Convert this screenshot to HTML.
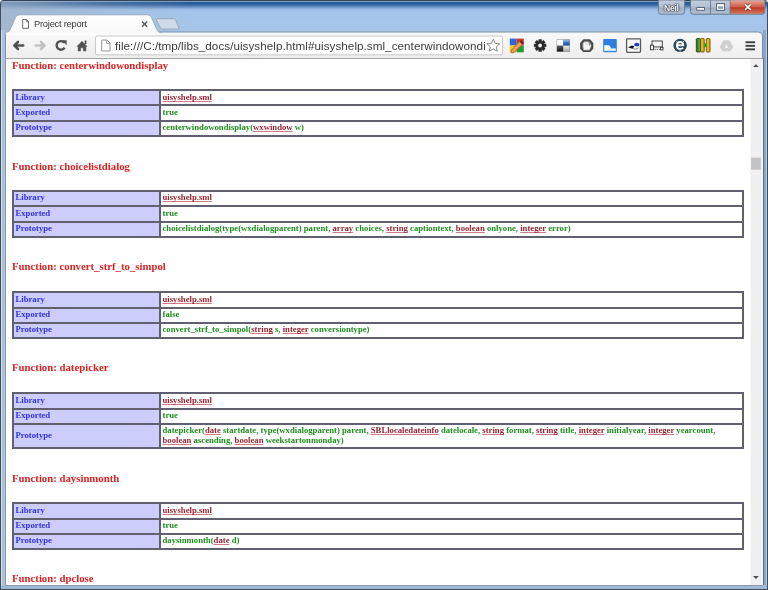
<!DOCTYPE html>
<html><head><meta charset="utf-8">
<style>
*{margin:0;padding:0;box-sizing:border-box}
html,body{width:768px;height:590px;overflow:hidden;background:#fff}
body{position:relative;font-family:"Liberation Sans",sans-serif}
.abs{position:absolute}
#frame{left:0;top:0;width:768px;height:590px;background:#3b4a5c;border-radius:6px 6px 0 0}
#glass{left:1px;top:1px;width:766px;height:588px;border-radius:5px 5px 0 0;
 background:linear-gradient(to bottom,#8fb0d6 0px,#2d5d97 1.5px,#2a5a95 6px,#6f95c4 8px,#a3c3e8 10px,#a2c1e6 20px,#a6c6ea 31px,#a8c3e0 40px,#a9c0d8 100%)}
#toolbar{left:5.5px;top:32px;width:757px;height:27px;background:linear-gradient(to bottom,#fbfbfb,#f1f1f1 60%,#ececec);border-top:1px solid #8094ad;border-bottom:1px solid #a6a6a6;border-radius:3px 3px 0 0}
#content{left:6px;top:59px;width:744px;height:525.5px;background:#fff;overflow:hidden;will-change:transform;opacity:0.999}
#scroll{left:750px;top:59px;width:12px;height:525.5px;background:#f0f0f0;border-left:1px solid #f7f7f7}
#innerline{left:5px;top:58px;width:758px;height:527.5px;border:1px solid #8898ab;border-top:none}
h3{position:absolute;left:6px;font:bold 10.75px "Liberation Serif",serif;color:#dc2323;white-space:nowrap;line-height:12px}
table{position:absolute;left:6px;width:732px;border-collapse:collapse;font:bold 8.69px "Liberation Serif",serif;table-layout:fixed}
td{border:2px solid #606070;padding:1.35px 0 2.15px 1.5px;line-height:9.8px;vertical-align:top}
td.two{padding:1.0px 0 1.6px 1.5px}
td.k{width:147px;background:#cdcdfb;color:#3131e6}
td.v{color:#1f8f1f}
td.v a{color:#962632;text-decoration:underline;text-decoration-color:#cf7c84;text-decoration-skip-ink:none}
</style></head><body>
<div id="frame" class="abs"></div>
<svg class="abs" style="left:0;top:0" width="768" height="590" viewBox="0 0 768 590">
 <defs>
  <linearGradient id="gv" gradientUnits="userSpaceOnUse" x1="0" y1="0" x2="0" y2="32">
   <stop offset="0" stop-color="#334358"/><stop offset="0.025" stop-color="#334358"/><stop offset="0.04" stop-color="#7f9dc0"/><stop offset="0.055" stop-color="#7f9dc0"/><stop offset="0.075" stop-color="#265a94"/>
   <stop offset="0.13" stop-color="#2c609e"/><stop offset="0.18" stop-color="#4a78ae"/><stop offset="0.24" stop-color="#7b9dcb"/>
   <stop offset="0.3" stop-color="#9fc0e6"/><stop offset="0.36" stop-color="#a3c5ea"/><stop offset="1" stop-color="#a7c5e8"/>
  </linearGradient>
  <linearGradient id="gfade" x1="0" y1="0" x2="1" y2="0">
   <stop offset="0" stop-color="#a2b2c6" stop-opacity="0.75"/><stop offset="0.06" stop-color="#a2b2c6" stop-opacity="0.55"/><stop offset="0.14" stop-color="#a2b2c6" stop-opacity="0.25"/><stop offset="0.25" stop-color="#a2b2c6" stop-opacity="0"/>
  </linearGradient>
  <linearGradient id="gside" x1="0" y1="0" x2="1" y2="0">
   <stop offset="0" stop-color="#9fb6cf"/><stop offset="0.5" stop-color="#b8cde3"/><stop offset="1" stop-color="#9cb3cc"/>
  </linearGradient>
  <linearGradient id="gtab" x1="0" y1="0" x2="0" y2="1">
   <stop offset="0" stop-color="#ffffff"/><stop offset="1" stop-color="#f9f9f9"/>
  </linearGradient>
  <linearGradient id="gtb" x1="0" y1="0" x2="0" y2="1">
   <stop offset="0" stop-color="#f9f9f9"/><stop offset="1" stop-color="#eeeeee"/>
  </linearGradient>
  <linearGradient id="gclose" x1="0" y1="0" x2="0" y2="1">
   <stop offset="0" stop-color="#e7a394"/><stop offset="0.45" stop-color="#d0604c"/><stop offset="0.55" stop-color="#c13a24"/><stop offset="1" stop-color="#d0735a"/>
  </linearGradient>
  <linearGradient id="gbtn" x1="0" y1="0" x2="0" y2="1">
   <stop offset="0" stop-color="#c3cedc"/><stop offset="0.5" stop-color="#b2bfd0"/><stop offset="0.55" stop-color="#9eadc2"/><stop offset="1" stop-color="#b4c3d6"/>
  </linearGradient>
 </defs>
 <!-- outer frame -->
 <path d="M0,4 Q0,0 4,0 L764,0 Q768,0 768,4 L768,586 Q768,590 764,590 L4,590 Q0,590 0,586 Z" fill="#3f4c5c"/>
 <rect x="1" y="0" width="766" height="34" rx="3" fill="url(#gv)"/>
 <rect x="1" y="32" width="766" height="557" fill="#a9c2dc"/>
 <rect x="6" y="59" width="744" height="526" fill="#fff"/>
 <rect x="1" y="1" width="766" height="31" rx="3" fill="url(#gfade)"/>
 <rect x="1" y="30" width="4" height="556" fill="#aac2da"/><rect x="1" y="30" width="1" height="556" fill="#d2deea"/>
 <rect x="763" y="30" width="4" height="556" fill="#88a6ca"/><rect x="766" y="30" width="1" height="556" fill="#b8cce0"/>
 <rect x="2" y="585" width="764" height="4" rx="1" fill="#9fb8d4"/>
 <!-- window buttons -->
 <path d="M658.4,0 L684.6,0 L684.6,11.6 Q684.6,14.2 682,14.2 L661,14.2 Q658.4,14.2 658.4,11.6 Z" fill="url(#gbtn)" stroke="#66768c" stroke-width="0.9"/>
 <path d="M690.5,0 L764.8,0 L764.8,11.6 Q764.8,14.2 762.2,14.2 L693.1,14.2 Q690.5,14.2 690.5,11.6 Z" fill="url(#gbtn)" stroke="#5c6c82" stroke-width="0.9"/>
 <path d="M730.2,0.5 L764.3,0.5 L764.3,11.6 Q764.3,13.7 762.2,13.7 L730.2,13.7 Z" fill="url(#gclose)"/>
 <line x1="710.5" y1="0.5" x2="710.5" y2="14" stroke="#66768c" stroke-width="0.9"/>
 <line x1="730.2" y1="0.5" x2="730.2" y2="14" stroke="#66768c" stroke-width="0.9"/>
 <rect x="696.8" y="7.6" width="7.8" height="2.6" fill="#fff" stroke="#3f4c5e" stroke-width="0.8"/>
 <rect x="716.4" y="3.7" width="8.2" height="6.6" fill="#8d9db2" stroke="#3f4c5e" stroke-width="0.8"/>
 <rect x="717.4" y="4.7" width="6.2" height="4.6" fill="none" stroke="#fff" stroke-width="1"/>
 <rect x="717.4" y="4.7" width="6.2" height="1.6" fill="#fff"/>
 <path d="M745,4.3 L750.8,9.9 M750.8,4.3 L745,9.9" stroke="#5a2016" stroke-width="2.8"/>
 <path d="M745,4.3 L750.8,9.9 M750.8,4.3 L745,9.9" stroke="#fff" stroke-width="1.7"/>
 <!-- new tab button -->
 <path d="M157,18.7 L173.5,18.7 Q175,18.7 175.6,20 L179,28 Q179.3,29.1 178,29.1 L162.5,29.1 Q161,29.1 160.5,28 L156.3,20 Q155.8,18.7 157,18.7 Z" fill="#d0d9e5" stroke="#94a5bc" stroke-width="0.9"/>
 <!-- toolbar -->
 <path d="M5.5,59 L5.5,36 Q5.5,32 9.5,32 L758.5,32 Q762.5,32 762.5,36 L762.5,59 Z" fill="url(#gtb)" stroke="#7a8ea8" stroke-width="1"/>
 <!-- tab -->
 <path d="M4.5,33 Q9,33 10.5,29 L15.5,17.5 Q16.5,14.8 19.5,14.8 L147.5,14.8 Q150.5,14.8 151.5,17.5 L156.5,29 Q158,33 162,33" fill="url(#gtab)" stroke="#93a6bd" stroke-width="0.9"/>
 <rect x="6" y="32.6" width="152" height="3" fill="#fbfbfb"/>
 <line x1="5.5" y1="58.5" x2="762.5" y2="58.5" stroke="#a4a4a4" stroke-width="1"/>
 <!-- tab page icon -->
 <path d="M22.7,19.5 L26.6,19.5 L28.5,21.4 L28.5,28.3 L22.7,28.3 Z" fill="#fff" stroke="#5e5e5e" stroke-width="0.9"/>
 <path d="M26.3,19.6 L26.3,21.7 L28.4,21.7" fill="none" stroke="#5e5e5e" stroke-width="0.8"/>
 <!-- tab close -->
 <path d="M142,21.5 L147.2,26.7 M147.2,21.5 L142,26.7" stroke="#5a5a5a" stroke-width="1.5"/>
 <!-- back -->
 <path d="M14.6,45.5 L23.2,45.5 M18,42 L14.4,45.5 L18,49" fill="none" stroke="#515151" stroke-width="2.6" stroke-linecap="round" stroke-linejoin="round"/>
 <!-- forward -->
 <path d="M44.4,45.5 L35.8,45.5 M41,42 L44.6,45.5 L41,49" fill="none" stroke="#c2c2c2" stroke-width="2.6" stroke-linecap="round" stroke-linejoin="round"/>
 <!-- reload -->
 <path d="M64.6,47.6 A4.3,4.3 0 1 1 64.2,42.6" fill="none" stroke="#515151" stroke-width="2.4"/>
 <path d="M61.6,40.3 L66.6,40.3 L66.6,45.3 Z" fill="#515151"/>
 <!-- home -->
 <path d="M77,46.4 L82,41.2 L87,46.4 L85.9,46.4 L85.9,51 L83.4,51 L83.4,47.8 L80.6,47.8 L80.6,51 L78.1,51 L78.1,46.4 Z" fill="#515151" stroke="#515151" stroke-width="0.5" stroke-linejoin="round"/>
 <rect x="84.7" y="40.5" width="1.7" height="3.6" fill="#515151"/>
 <!-- omnibox -->
 <rect x="95.5" y="36" width="407" height="18.8" rx="1.5" fill="#fff" stroke="#c8c8c8" stroke-width="1"/>
 
 <path d="M101.7,40 L107,40 L110,43 L110,51 L101.7,51 Z" fill="#fff" stroke="#8a8a8a" stroke-width="0.9"/>
 <path d="M106.6,40.2 L106.6,43.4 L109.8,43.4" fill="none" stroke="#8a8a8a" stroke-width="0.8"/>
 <!-- star -->
 <path d="M493.3,39.3 L495.2,43.4 L499.7,43.8 L496.3,46.8 L497.3,51.2 L493.3,48.9 L489.3,51.2 L490.3,46.8 L486.9,43.8 L491.4,43.4 Z" fill="#fff" stroke="#7a7a7a" stroke-width="0.9" stroke-linejoin="round"/>
 <!-- ext1 colorful -->
 <rect x="509.8" y="38.6" width="7" height="6.9" fill="#2f6ad6"/><rect x="516.8" y="38.6" width="7" height="6.9" fill="#d8342a"/>
 <rect x="509.8" y="45.5" width="7" height="6.8" fill="#f3c623"/><rect x="516.8" y="45.5" width="7" height="6.8" fill="#239a35"/>
 <path d="M511.3,50.2 L519.6,41.6 L522.4,44.2 L514,52.6 L511,52.6 Z" fill="#e9a25a" stroke="#a5561e" stroke-width="0.8" stroke-linejoin="round"/>
 <path d="M519.6,41.6 L521.3,39.9 L524,42.5 L522.4,44.2 Z" fill="#6a2a10"/>
 <!-- gear -->
 <path d="M538.59,41.48 L538.77,39.55 L541.43,39.55 L541.61,41.48 L541.87,41.58 L543.37,40.35 L545.25,42.23 L544.02,43.73 L544.12,43.99 L546.05,44.17 L546.05,46.83 L544.12,47.01 L544.02,47.27 L545.25,48.77 L543.37,50.65 L541.87,49.42 L541.61,49.52 L541.43,51.45 L538.77,51.45 L538.59,49.52 L538.33,49.42 L536.83,50.65 L534.95,48.77 L536.18,47.27 L536.08,47.01 L534.15,46.83 L534.15,44.17 L536.08,43.99 L536.18,43.73 L534.95,42.23 L536.83,40.35 L538.33,41.58 Z" fill="#2a2a2a" stroke="#2a2a2a" stroke-width="0.5" stroke-linejoin="round"/>
 <circle cx="540.1" cy="45.5" r="1.9" fill="#f2f2f2"/>
 <!-- ext3 squares -->
 <defs>
  <linearGradient id="sqb" x1="0" y1="0" x2="0" y2="1"><stop offset="0" stop-color="#a8c4ec"/><stop offset="0.5" stop-color="#2f6cc4"/><stop offset="1" stop-color="#1a4fa0"/></linearGradient>
  <linearGradient id="sqk" x1="0" y1="0" x2="0" y2="1"><stop offset="0" stop-color="#5a5a5a"/><stop offset="1" stop-color="#111"/></linearGradient>
  <linearGradient id="sqg" x1="0" y1="0" x2="0" y2="1"><stop offset="0" stop-color="#eaeaea"/><stop offset="1" stop-color="#a8a8a8"/></linearGradient>
 </defs>
 <rect x="556.6" y="39.3" width="13.4" height="12.6" fill="#8a8a8a"/>
 <rect x="557.1" y="39.8" width="6.2" height="5.9" fill="#fbfbfb"/><rect x="563.3" y="39.8" width="6.2" height="5.9" fill="url(#sqb)"/>
 <rect x="557.1" y="45.7" width="6.2" height="5.7" fill="url(#sqk)"/><rect x="563.3" y="45.7" width="6.2" height="5.7" fill="url(#sqg)"/>
 <!-- ext4 hand octagon -->
 <path d="M583.8,40.4 L589.6,40.4 L592.2,43.4 L592.2,48.2 L589.6,51 L583.8,51 L581.2,48.2 L581.2,43.4 Z" fill="#9a9a9a" stroke="#474747" stroke-width="2.2" stroke-linejoin="round"/>
 <path d="M583.4,50.2 L582.9,44 Q582.9,41.6 585.3,41.6 L587.3,41.4 Q589.2,41.6 589.2,43.3 L589.3,45.6 L590.8,44 L591.4,45.4 L589.6,50.2 Z" fill="#f8f8f8" stroke="#6a6a6a" stroke-width="0.5"/>
 <path d="M585.6,42 L585.6,44.6 M587.2,41.8 L587.2,44.6" stroke="#b0b0b0" stroke-width="0.5"/>
 <!-- ext5 blue box -->
 <rect x="603.2" y="39" width="13.6" height="13.2" rx="1" fill="#2f7ee0"/>
 <path d="M604.3,45.2 L609.2,45.2 L611.3,48.6 L615.7,48.6 L615.7,51.1 L604.3,51.1 Z" fill="#fff"/>
 <rect x="604.3" y="50.1" width="11.4" height="1" fill="#c9ddf6"/>
 <!-- ext6 -->
 <rect x="626.6" y="38.8" width="13.9" height="13.6" rx="0.8" fill="#f8f8f8" stroke="#5a5a5a" stroke-width="1.3"/>
 <path d="M628,47.6 L631.8,45.6 L634.6,46.2 L632.4,48.8 Z" fill="#111"/>
 <path d="M632.5,48.6 Q636,50 638.6,47.8" fill="none" stroke="#555" stroke-width="0.7"/>
 <ellipse cx="636.8" cy="44.6" rx="2.6" ry="1.9" fill="#1f3fd0"/>
 <!-- ext7 monitor -->
 <rect x="652" y="41" width="10.3" height="5.9" fill="none" stroke="#333" stroke-width="0.9"/>
 <rect x="650.4" y="45.2" width="3.1" height="4.6" fill="#fff" stroke="#333" stroke-width="0.9"/>
 <rect x="660.6" y="47.4" width="2.4" height="2.5" fill="#fff" stroke="#333" stroke-width="0.9"/>
 <line x1="654.5" y1="49.3" x2="659.8" y2="49.3" stroke="#333" stroke-width="0.9" stroke-dasharray="1.2,1"/>
 <!-- ext8 e -->
 <circle cx="680.1" cy="45.4" r="6.7" fill="#2b4659"/>
 <path d="M675.8,40.6 L677.8,42.6 M684.4,40.6 L682.4,42.6 M680.1,52 L680.1,49.6" stroke="#d8e0e6" stroke-width="0.7"/>
 <path d="M677.1,45.3 L683.2,45.3 Q683.3,42 680.2,42 Q676.9,42 676.9,45.4 Q676.9,48.9 680.3,48.9 Q682.3,48.9 683.1,47.8" fill="none" stroke="#fff" stroke-width="1.9"/>
 <!-- ext9 bars -->
 <defs><linearGradient id="gg" x1="0" y1="0" x2="1" y2="0"><stop offset="0" stop-color="#1f6a1a"/><stop offset="1" stop-color="#6ac040"/></linearGradient>
 <linearGradient id="gy" x1="0" y1="0" x2="1" y2="0"><stop offset="0" stop-color="#f5d020"/><stop offset="1" stop-color="#e0a010"/></linearGradient></defs>
 <rect x="696.3" y="38.6" width="4.3" height="13.4" rx="0.8" fill="url(#gg)" stroke="#2c3a10" stroke-width="0.8"/>
 <rect x="700.6" y="38.6" width="3.6" height="13.4" rx="0.8" fill="url(#gy)" stroke="#4a3a08" stroke-width="0.8"/>
 <rect x="706.3" y="38.6" width="3.7" height="13.4" rx="0.8" fill="url(#gy)" stroke="#4a3a08" stroke-width="0.8"/>
 <path d="M704.2,42.3 L707.6,45.3 L704.2,48.3 Z" fill="#2da02a"/>
 <!-- ext10 drive -->
 <path d="M723.4,40.3 L729.6,40.3 L733.4,46.9 L730.4,51.2 L722.6,51.2 L719.7,46.9 Z" fill="#cfcfcf"/>
 <path d="M726.5,44.3 L728.6,47.9 L724.4,47.9 Z" fill="#f3f3f3"/>
 <!-- menu -->
 <rect x="745.5" y="41.3" width="9.5" height="1.9" fill="#3e3e3e"/>
 <rect x="745.5" y="44.9" width="9.5" height="1.9" fill="#3e3e3e"/>
 <rect x="745.5" y="48.4" width="9.5" height="1.9" fill="#3e3e3e"/>
</svg>
<div class="abs" style="left:34.4px;top:17.6px;font:9.4px 'Liberation Sans',sans-serif;letter-spacing:-0.26px;color:#3a3a3a;white-space:nowrap;opacity:.999;will-change:transform">Project report</div>
<div class="abs" style="left:664.4px;top:3.2px;font:bold 8.6px 'Liberation Sans',sans-serif;letter-spacing:-0.25px;color:#f8f8f8;white-space:nowrap;text-shadow:0 0 1px #1e2836,0 0 1.5px #1e2836,0 0 2px #3a4658;opacity:.999;will-change:transform">Neil</div>
<div class="abs" style="left:115.2px;top:38.9px;width:371px;overflow:hidden;font:11.7px 'Liberation Sans',sans-serif;letter-spacing:0.035px;color:#3c3c3c;white-space:nowrap;opacity:.999;will-change:transform">file:///C:/tmp/libs_docs/uisyshelp.html#uisyshelp.sml_centerwindowondi</div>
<div id="content" class="abs">
 <h3 style="top:-0.1px">Function: centerwindowondisplay</h3>
 <table style="top:30.2px"><tr><td class="k">Library</td><td class="v"><a>uisyshelp.sml</a></td></tr><tr><td class="k">Exported</td><td class="v">true</td></tr><tr><td class="k">Prototype</td><td class="v">centerwindowondisplay(<a>wxwindow</a> w)</td></tr></table>
 <h3 style="top:101px">Function: choicelistdialog</h3>
 <table style="top:131px"><tr><td class="k">Library</td><td class="v"><a>uisyshelp.sml</a></td></tr><tr><td class="k">Exported</td><td class="v">true</td></tr><tr><td class="k">Prototype</td><td class="v">choicelistdialog(type(wxdialogparent) parent, <a>array</a> choices, <a>string</a> captiontext, <a>boolean</a> onlyone, <a>integer</a> error)</td></tr></table>
 <h3 style="top:201.4px">Function: convert_strf_to_simpol</h3>
 <table style="top:232.3px"><tr><td class="k">Library</td><td class="v"><a>uisyshelp.sml</a></td></tr><tr><td class="k">Exported</td><td class="v">false</td></tr><tr><td class="k">Prototype</td><td class="v">convert_strf_to_simpol(<a>string</a> s, <a>integer</a> conversiontype)</td></tr></table>
 <h3 style="top:302.3px">Function: datepicker</h3>
 <table style="top:333.3px"><tr><td class="k">Library</td><td class="v"><a>uisyshelp.sml</a></td></tr><tr><td class="k">Exported</td><td class="v">true</td></tr><tr><td class="k" style="vertical-align:middle;padding-top:0;padding-bottom:0">Prototype</td><td class="v two">datepicker(<a>date</a> startdate, type(wxdialogparent) parent, <a>SBLlocaledateinfo</a> datelocale, <a>string</a> format, <a>string</a> title, <a>integer</a> initialyear, <a>integer</a> yearcount,<br><a>boolean</a> ascending, <a>boolean</a> weekstartonmonday)</td></tr></table>
 <h3 style="top:412.5px">Function: daysinmonth</h3>
 <table style="top:443.4px"><tr><td class="k">Library</td><td class="v"><a>uisyshelp.sml</a></td></tr><tr><td class="k">Exported</td><td class="v">true</td></tr><tr><td class="k">Prototype</td><td class="v">daysinmonth(<a>date</a> d)</td></tr></table>
 <h3 style="top:513px">Function: dpclose</h3>
</div>
<div id="scroll" class="abs"></div>
<svg class="abs" style="left:750px;top:59px" width="12" height="526" viewBox="0 0 12 526">
 <path d="M3.1,8 L5.9,5.2 L8.7,8 Z" fill="#4a4a4a"/>
 <path d="M3,517 L5.9,520 L8.8,517 Z" fill="#4a4a4a"/>
 <rect x="1.1" y="98.6" width="9.7" height="12.1" fill="#c3c3c3"/>
</svg>
<div class="abs" style="left:763px;top:58px;width:1px;height:527px;background:#5f7088"></div><div class="abs" style="left:762px;top:59px;width:1px;height:526px;background:#f4f6f9"></div>
<div class="abs" style="left:5px;top:58px;width:1px;height:527px;background:#8b9bad"></div>
<div class="abs" style="left:5px;top:584.5px;width:758px;height:1px;background:#8b9bad"></div>
</body></html>
